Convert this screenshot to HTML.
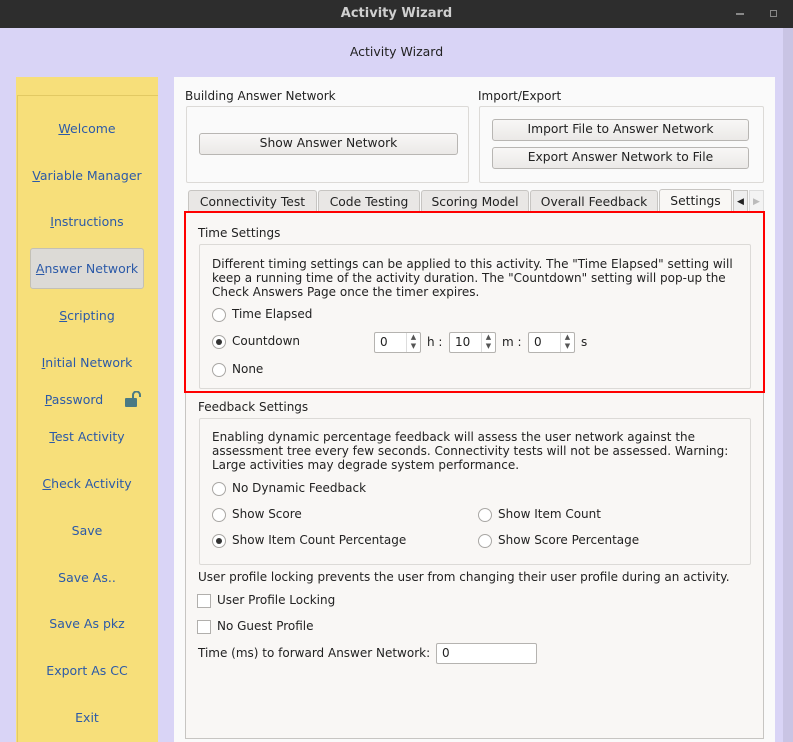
<!DOCTYPE html>
<html><head><meta charset="utf-8"><style>
*{margin:0;padding:0;box-sizing:border-box}
body{width:793px;height:742px;overflow:hidden;background:#d9d4f6;font-family:"DejaVu Sans","Liberation Sans",sans-serif;font-size:12px;color:#222;position:relative}
.a{position:absolute;white-space:nowrap}
.t{line-height:14px}
.sb{color:#2c5aa8;font-size:12.5px;width:142px;text-align:center;left:16px}
.btn{position:absolute;border:1px solid #b8b6b3;border-radius:3px;background:linear-gradient(#f8f7f6,#ebe9e7);text-align:center;font-size:12.3px;line-height:19px}
.box{position:absolute;border:1px solid #dcdad7;border-radius:2px}
.rad{position:absolute;width:14px;height:14px;border:1px solid #a9a7a4;border-radius:50%;background:#fff}
.rad.on::after{content:"";position:absolute;left:3px;top:3px;width:6px;height:6px;border-radius:50%;background:#333}
.chk{position:absolute;width:14px;height:14px;border:1px solid #b1afac;background:#fff}
.tab{position:absolute;top:190px;height:22px;border:1px solid #c7c5c2;border-bottom:none;background:#e9e7e5;font-size:12.3px;line-height:22px;text-align:center;border-radius:3px 3px 0 0}
.spin{position:absolute;height:21px;border:1px solid #b5b3b0;border-radius:2px;background:#fff;font-size:12px;line-height:19px;padding-left:5px}
.spin i{position:absolute;right:0;top:0;width:14px;height:19px;border-left:1px solid #ddd;font-style:normal;font-size:7px;line-height:9px;text-align:center;color:#555}
.l{font-size:12px}
u{text-decoration:underline}
</style></head><body>
<div class="a" style="left:0;top:0;width:793px;height:28px;background:#2d2d2d"></div>
<div class="a" style="left:0;top:6px;width:793px;text-align:center;color:#cfcfcf;font-weight:bold;font-size:13px">Activity Wizard</div>
<div class="a" style="left:736px;top:13px;width:8px;height:2px;background:#888"></div>
<div class="a" style="left:770px;top:10px;width:7px;height:7px;border:1px solid #888"></div>
<div class="a" style="left:783px;top:28px;width:10px;height:714px;background:#c9c4e4"></div>
<div class="a" style="left:0;top:44px;width:793px;text-align:center;font-size:12.5px">Activity Wizard</div>

<div class="a" style="left:16px;top:77px;width:142px;height:665px;background:#f7df7a"></div>
<div class="a" style="left:17px;top:95px;width:141px;height:647px;border:1px solid #e2c963;border-right:none;border-bottom:none"></div>
<div class="a" style="left:30px;top:248px;width:114px;height:41px;background:#dcdad6;border:1px solid #c3c0b5;border-radius:3px"></div>
<div class="a sb" style="top:121px"><u>W</u>elcome</div>
<div class="a sb" style="top:168px"><u>V</u>ariable Manager</div>
<div class="a sb" style="top:214px"><u>I</u>nstructions</div>
<div class="a sb" style="top:261px"><u>A</u>nswer Network</div>
<div class="a sb" style="top:308px"><u>S</u>cripting</div>
<div class="a sb" style="top:355px"><u>I</u>nitial Network</div>
<div class="a sb" style="top:392px;left:3px"><u>P</u>assword</div>
<svg class="a" style="left:124px;top:391px" width="20" height="18"><rect x="1" y="7" width="12" height="9" rx="1" fill="#4a7a84"/><path d="M9 7V4a3.5 3.5 0 0 1 7 0v2" stroke="#4a7a84" stroke-width="2" fill="none"/></svg>
<div class="a sb" style="top:429px"><u>T</u>est Activity</div>
<div class="a sb" style="top:476px"><u>C</u>heck Activity</div>
<div class="a sb" style="top:523px">Save</div>
<div class="a sb" style="top:570px">Save As..</div>
<div class="a sb" style="top:616px">Save As pkz</div>
<div class="a sb" style="top:663px">Export As CC</div>
<div class="a sb" style="top:710px">Exit</div>

<div class="a" style="left:174px;top:77px;width:601px;height:665px;background:#fafafa"></div>
<div class="a l" style="left:185px;top:89px">Building Answer Network</div>
<div class="box" style="left:186px;top:106px;width:283px;height:77px"></div>
<div class="btn" style="left:199px;top:133px;width:259px;height:22px">Show Answer Network</div>
<div class="a l" style="left:478px;top:89px">Import/Export</div>
<div class="box" style="left:479px;top:106px;width:285px;height:77px"></div>
<div class="btn" style="left:492px;top:119px;width:257px;height:22px">Import File to Answer Network</div>
<div class="btn" style="left:492px;top:147px;width:257px;height:22px">Export Answer Network to File</div>

<div class="tab" style="left:188px;width:129px">Connectivity Test</div>
<div class="tab" style="left:318px;width:102px">Code Testing</div>
<div class="tab" style="left:421px;width:108px">Scoring Model</div>
<div class="tab" style="left:530px;width:128px">Overall Feedback</div>
<div class="tab" style="left:659px;width:73px;top:189px;height:24px;background:#f9f7f5;z-index:2">Settings</div>
<div class="a" style="left:733px;top:190px;width:15px;height:22px;border:1px solid #c7c5c2;background:#eee;font-size:9px;text-align:center;line-height:22px">◀</div>
<div class="a" style="left:749px;top:190px;width:15px;height:22px;border:1px solid #ddd;background:#f3f3f3;font-size:9px;text-align:center;line-height:22px;color:#bbb">▶</div>

<div class="a" style="left:185px;top:212px;width:579px;height:527px;background:#f9f7f5;border:1px solid #c7c5c2"></div>
<div class="a l" style="left:198px;top:226px">Time Settings</div>
<div class="box" style="left:199px;top:244px;width:552px;height:145px"></div>
<div class="a t" style="left:212px;top:257px">Different timing settings can be applied to this activity. The "Time Elapsed" setting will<br>keep a running time of the activity duration. The "Countdown" setting will pop-up the<br>Check Answers Page once the timer expires.</div>
<div class="rad" style="left:212px;top:308px"></div><div class="a l" style="left:232px;top:307px">Time Elapsed</div>
<div class="rad on" style="left:212px;top:335px"></div><div class="a l" style="left:232px;top:334px">Countdown</div>
<div class="rad" style="left:212px;top:363px"></div><div class="a l" style="left:232px;top:362px">None</div>
<div class="spin" style="left:374px;top:332px;width:47px">0<i>▲<br>▼</i></div>
<div class="a l" style="left:427px;top:335px">h :</div>
<div class="spin" style="left:449px;top:332px;width:47px">10<i>▲<br>▼</i></div>
<div class="a l" style="left:502px;top:335px">m :</div>
<div class="spin" style="left:528px;top:332px;width:47px">0<i>▲<br>▼</i></div>
<div class="a l" style="left:581px;top:335px">s</div>
<div class="a" style="left:184px;top:211px;width:581px;height:182px;border:2px solid #f00;z-index:3"></div>

<div class="a l" style="left:198px;top:400px">Feedback Settings</div>
<div class="box" style="left:199px;top:418px;width:552px;height:147px"></div>
<div class="a t" style="left:212px;top:430px">Enabling dynamic percentage feedback will assess the user network against the<br>assessment tree every few seconds. Connectivity tests will not be assessed. Warning:<br>Large activities may degrade system performance.</div>
<div class="rad" style="left:212px;top:482px"></div><div class="a l" style="left:232px;top:481px">No Dynamic Feedback</div>
<div class="rad" style="left:212px;top:508px"></div><div class="a l" style="left:232px;top:507px">Show Score</div>
<div class="rad on" style="left:212px;top:534px"></div><div class="a l" style="left:232px;top:533px">Show Item Count Percentage</div>
<div class="rad" style="left:478px;top:508px"></div><div class="a l" style="left:498px;top:507px">Show Item Count</div>
<div class="rad" style="left:478px;top:534px"></div><div class="a l" style="left:498px;top:533px">Show Score Percentage</div>

<div class="a l" style="left:198px;top:570px">User profile locking prevents the user from changing their user profile during an activity.</div>
<div class="chk" style="left:197px;top:594px"></div><div class="a l" style="left:217px;top:593px">User Profile Locking</div>
<div class="chk" style="left:197px;top:620px"></div><div class="a l" style="left:217px;top:619px">No Guest Profile</div>
<div class="a l" style="left:198px;top:646px">Time (ms) to forward Answer Network:</div>
<div class="spin" style="left:436px;top:643px;width:101px">0</div>
</body></html>
